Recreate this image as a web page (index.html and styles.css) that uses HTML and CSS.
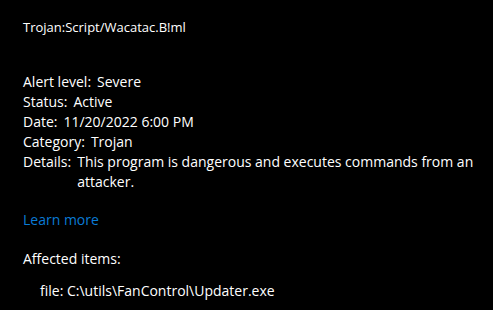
FILE: index.html
```html
<!DOCTYPE html>
<html lang="en">
<head>
<meta charset="utf-8">
<link rel="stylesheet" href="styles.css">
</head>
<body>
<main class="panel">
  <h1 class="title">Trojan:Script/Wacatac.B!ml</h1>
  <div class="facts">
    <div class="row"><span class="label">Alert level:</span><span class="value">Severe</span></div>
    <div class="row"><span class="label">Status:</span><span class="value">Active</span></div>
    <div class="row"><span class="label">Date:</span><span class="value">11/20/2022 6:00 PM</span></div>
    <div class="row"><span class="label">Category:</span><span class="value">Trojan</span></div>
    <div class="row"><span class="label">Details:</span><span class="value">This program is dangerous and executes commands from an attacker.</span></div>
  </div>
  <a class="link" href="#">Learn more</a>
  <h2 class="affected">Affected items:</h2>
  <p class="file">file: C:\utils\FanControl\Updater.exe</p>
</main>
</body>
</html>
```
FILE: styles.css
```css
html, body {
  margin: 0;
  background: #000;
}
body {
  width: 493px;
  height: 310px;
  overflow: hidden;
  font-family: "Open Sans", "Noto Sans", sans-serif;
  color: #fff;
}
.panel {
  display: flex;
  flex-direction: column;
  align-items: flex-start;
  padding: 17px 12px 0 23px;
}
.title {
  margin: 0;
  font-size: 13px;
  font-weight: 400;
  line-height: 20px;
}
.facts {
  margin-top: 35px;
  display: flex;
  flex-direction: column;
  font-size: 14px;
  line-height: 20px;
}
.row {
  display: flex;
  gap: 6px;
}
.label {
  flex: none;
}
.value {
  flex: 1;
}
.link {
  margin-top: 18px;
  font-size: 14px;
  line-height: 20px;
  color: #0a7bd6;
  text-decoration: none;
}
.affected {
  margin: 19px 0 0;
  font-size: 14px;
  font-weight: 400;
  line-height: 20px;
}
.file {
  margin: 12px 0 0 17px;
  font-size: 14px;
  line-height: 20px;
}
```
